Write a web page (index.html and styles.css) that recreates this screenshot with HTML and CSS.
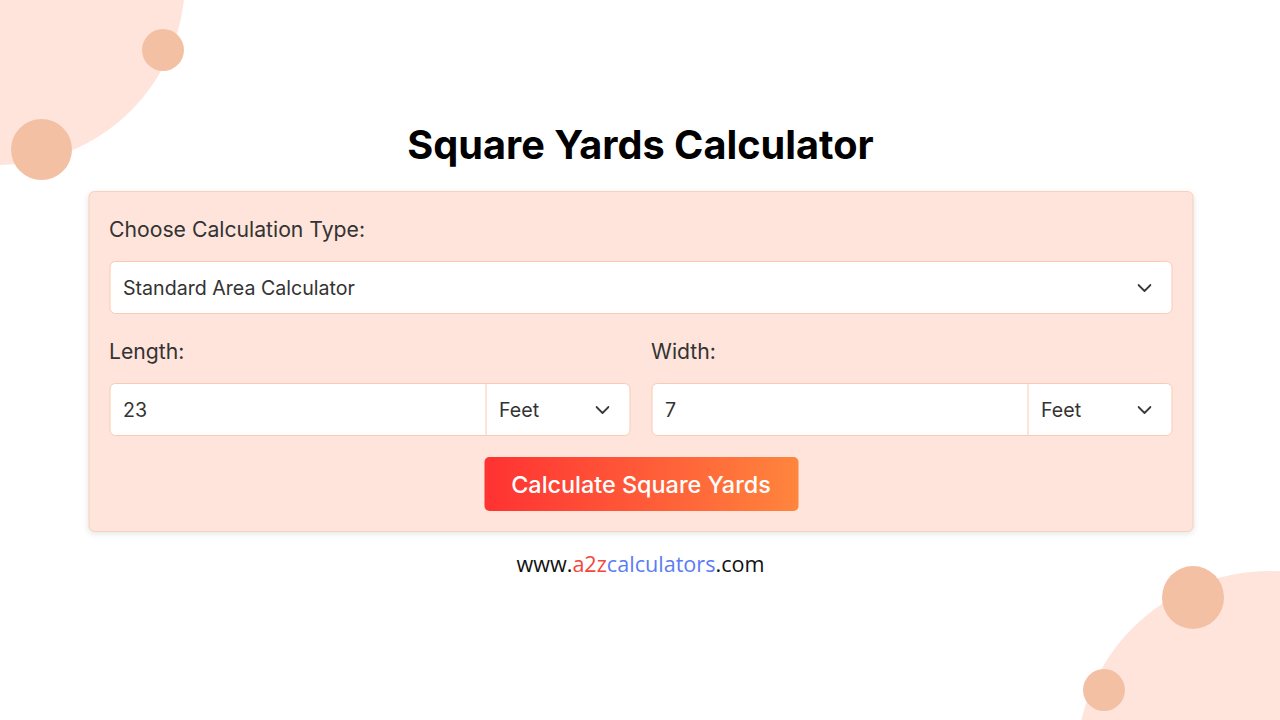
FILE: index.html
```html
<!DOCTYPE html>
<html lang="en">
<head>
<meta charset="utf-8">
<title>Square Yards Calculator</title>
<link rel="stylesheet" href="styles.css">
</head>
<body>
<div class="decor">
  <span class="blob blob-tl"></span>
  <span class="dot dot-tl1"></span>
  <span class="dot dot-tl2"></span>
  <span class="blob blob-br"></span>
  <span class="dot dot-br1"></span>
  <span class="dot dot-br2"></span>
</div>
<main class="page">
  <h1 class="title">Square Yards Calculator</h1>
  <section class="card">
    <label class="label">Choose Calculation Type:</label>
    <div class="field select-full">
      <span class="value">Standard Area Calculator</span>
      <svg class="chev" viewBox="0 0 14 8" width="14" height="8"><path d="M1 1l6 6 6-6" fill="none" stroke="#3a3a3a" stroke-width="1.8" stroke-linecap="round" stroke-linejoin="round"/></svg>
    </div>
    <div class="row">
      <div class="col">
        <label class="label">Length:</label>
        <div class="group">
          <div class="input"><span class="value">23</span></div>
          <div class="unit"><span class="value">Feet</span>
            <svg class="chev" viewBox="0 0 14 8" width="14" height="8"><path d="M1 1l6 6 6-6" fill="none" stroke="#3a3a3a" stroke-width="1.8" stroke-linecap="round" stroke-linejoin="round"/></svg>
          </div>
        </div>
      </div>
      <div class="col">
        <label class="label">Width:</label>
        <div class="group">
          <div class="input"><span class="value">7</span></div>
          <div class="unit"><span class="value">Feet</span>
            <svg class="chev" viewBox="0 0 14 8" width="14" height="8"><path d="M1 1l6 6 6-6" fill="none" stroke="#3a3a3a" stroke-width="1.8" stroke-linecap="round" stroke-linejoin="round"/></svg>
          </div>
        </div>
      </div>
    </div>
    <div class="actions">
      <button class="btn">Calculate Square Yards</button>
    </div>
  </section>
  <p class="site">www.<span class="red">a2z</span><span class="blue">calculators</span>.com</p>
</main>
</body>
</html>
```

FILE: styles.css
```css
html, body {
  margin: 0;
  padding: 0;
  background: #ffffff;
  width: 1280px;
  height: 720px;
  overflow: hidden;
}
body {
  position: relative;
  font-family: Inter, "Noto Sans", sans-serif;
}
.decor {
  position: absolute;
  left: 0;
  top: 0;
  width: 1280px;
  height: 720px;
  overflow: hidden;
}
.decor span {
  position: absolute;
  border-radius: 50%;
  display: block;
}
.blob { background: #fee4da; }
.dot { background: #f4c0a4; }
.blob-tl { left: -185px; top: -205px; width: 370px; height: 370px; }
.dot-tl1 { left: 142px; top: 29px; width: 42px; height: 42px; }
.dot-tl2 { left: 11px; top: 119px; width: 61px; height: 61px; }
.blob-br { left: 1076px; top: 571px; width: 388px; height: 388px; }
.dot-br1 { left: 1162px; top: 566px; width: 62px; height: 63px; }
.dot-br2 { left: 1083px; top: 669px; width: 42px; height: 42px; }

.page {
  position: relative;
  width: 1105px;
  margin: 0 auto;
  padding-top: 119px;
  transform: translateX(0.5px);
}
.title {
  margin: 0;
  text-align: center;
  font-size: 39.7px;
  line-height: 52px;
  font-weight: 700;
  color: #000;
}
.card {
  margin-top: 20px;
  background: #fee4da;
  border: 1.5px solid #f9d0bd;
  border-radius: 6px;
  box-shadow: 0 2px 6px rgba(0,0,0,0.10);
  padding: 20px;
  box-sizing: border-box;
  height: 341px;
}
.label {
  display: block;
  font-size: 21.2px;
  line-height: 34px;
  color: #333;
  margin-bottom: 15px;
}
.field, .group {
  background: #fff;
  border: 1.5px solid #fbc9b4;
  border-radius: 6px;
  box-sizing: border-box;
}
.select-full {
  height: 53px;
  display: flex;
  align-items: center;
  justify-content: space-between;
  padding: 0 20px 0 13px;
}
.value {
  font-size: 19.6px;
  color: #333;
}
.row {
  display: grid;
  grid-template-columns: 1fr 1fr;
  gap: 21px;
  margin-top: 20px;
}
.group {
  height: 53px;
  display: flex;
}
.input {
  flex: 1;
  display: flex;
  align-items: center;
  padding-left: 13px;
  border-right: 1.5px solid #fbc9b4;
}
.unit {
  width: 143px;
  box-sizing: border-box;
  display: flex;
  align-items: center;
  justify-content: space-between;
  padding: 0 20px 0 13px;
}
.actions {
  display: flex;
  justify-content: center;
  margin-top: 21px;
}
.btn {
  width: 314px;
  height: 54px;
  border: none;
  border-radius: 5px;
  background: linear-gradient(90deg, #ff3232 0%, #ff5a38 50%, #ff853d 100%);
  color: #fff;
  font-family: Inter, "Noto Sans", sans-serif;
  font-size: 23.4px;
  font-weight: 500;
  padding: 0;
  margin-left: 1px;
}
.site {
  margin: 18px 0 0;
  text-align: center;
  font-family: "Open Sans", "Noto Sans", sans-serif;
  font-size: 21.6px;
  color: #111;
  line-height: 28px;
}
.red { color: #f4473a; }
.blue { color: #5b7cf5; }
```
